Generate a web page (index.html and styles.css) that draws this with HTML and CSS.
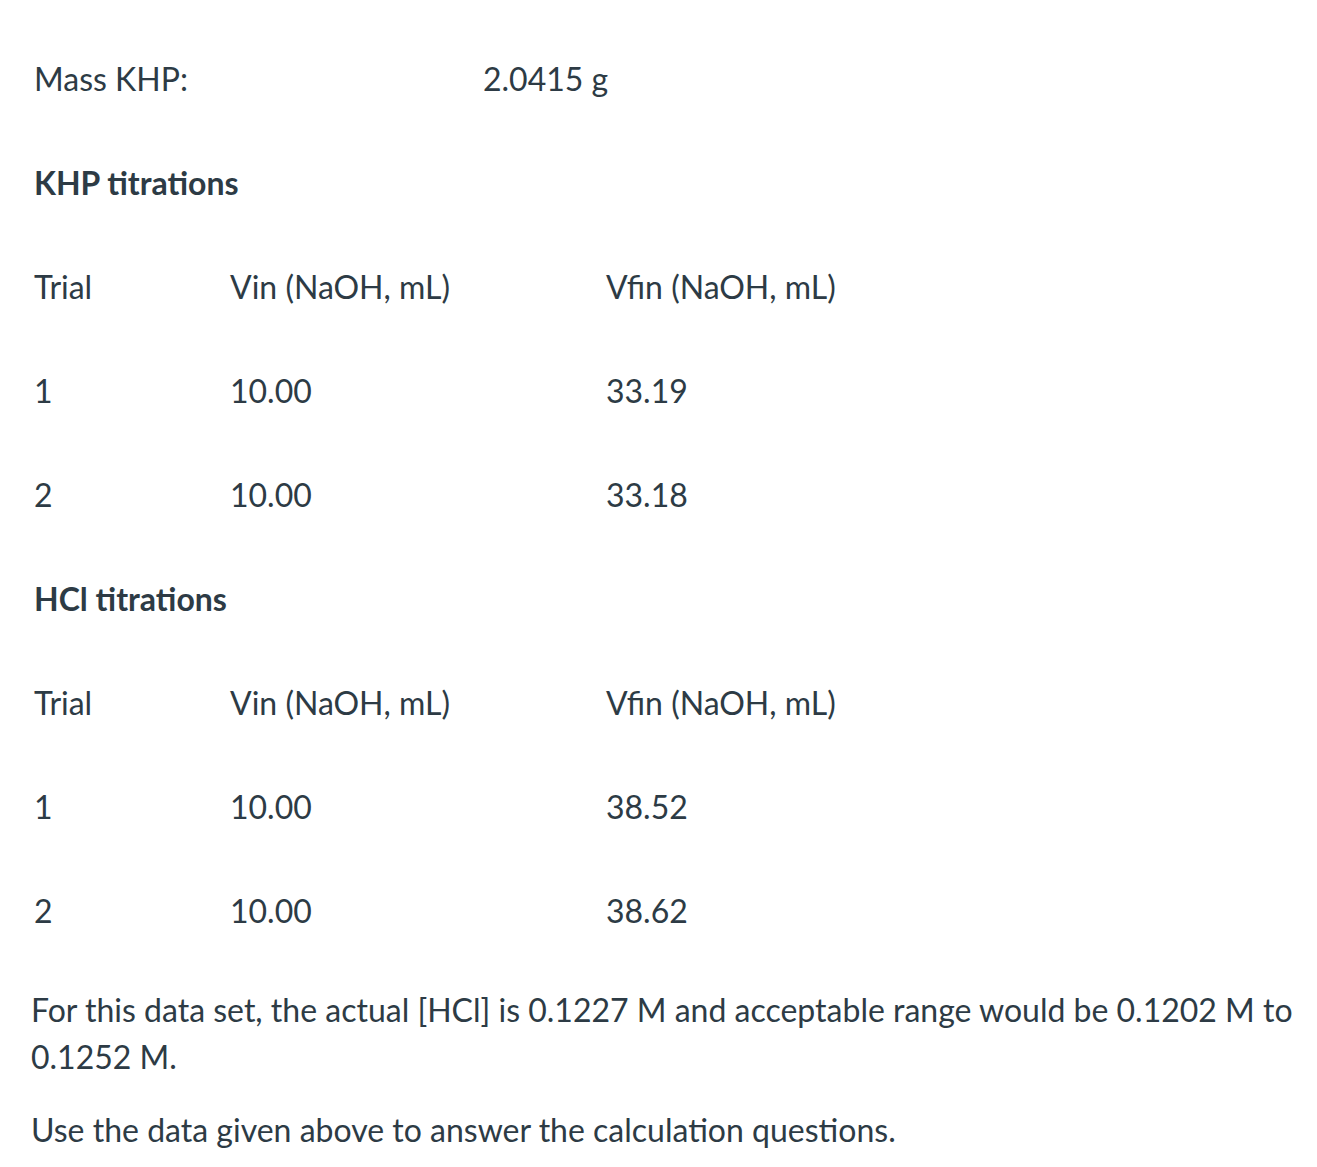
FILE: index.html
```html
<!DOCTYPE html>
<html>
<head>
<meta charset="utf-8">
<link rel="stylesheet" href="styles.css">
</head>
<body>
<div class="page">
  <div class="mass">
    <div class="row"><span>Mass KHP:</span><span class="val">2.0415 g</span></div>
  </div>
  <div class="row head"><strong>KHP titrations</strong></div>
  <div class="table">
    <div class="cell">Trial</div><div class="cell">Vin (NaOH, mL)</div><div class="cell">Vfin (NaOH, mL)</div>
    <div class="cell">1</div><div class="cell">10.00</div><div class="cell">33.19</div>
    <div class="cell">2</div><div class="cell">10.00</div><div class="cell">33.18</div>
  </div>
  <div class="row head"><strong>HCl titrations</strong></div>
  <div class="table">
    <div class="cell">Trial</div><div class="cell">Vin (NaOH, mL)</div><div class="cell">Vfin (NaOH, mL)</div>
    <div class="cell">1</div><div class="cell">10.00</div><div class="cell">38.52</div>
    <div class="cell">2</div><div class="cell">10.00</div><div class="cell">38.62</div>
  </div>
  <p class="text">For this data set, the actual [HCl] is 0.1227 M and acceptable range would be 0.1202 M to 0.1252 M.</p>
  <p class="text">Use the data given above to answer the calculation questions.</p>
</div>
</body>
</html>
```
FILE: styles.css
```css
html, body {
  margin: 0;
  padding: 0;
  background: #ffffff;
}
body {
  font-family: Lato, "Noto Sans", sans-serif;
  font-size: 32px;
  color: #2d3b45;
}
.page {
  padding: 26px 20px 0 31px;
}
.row {
  height: 104px;
  display: flex;
  align-items: center;
  padding-left: 3px;
}
.mass .row span:first-child {
  width: 449px;
}
.head strong {
  font-weight: 700;
}
.table {
  display: grid;
  grid-template-columns: 196px 376px 1fr;
  padding-left: 3px;
}
.cell {
  height: 104px;
  display: flex;
  align-items: center;
}
.text {
  margin: 0 0 26px 0;
  line-height: 47px;
}
.text:first-of-type {
  margin-top: 24px;
}
```
